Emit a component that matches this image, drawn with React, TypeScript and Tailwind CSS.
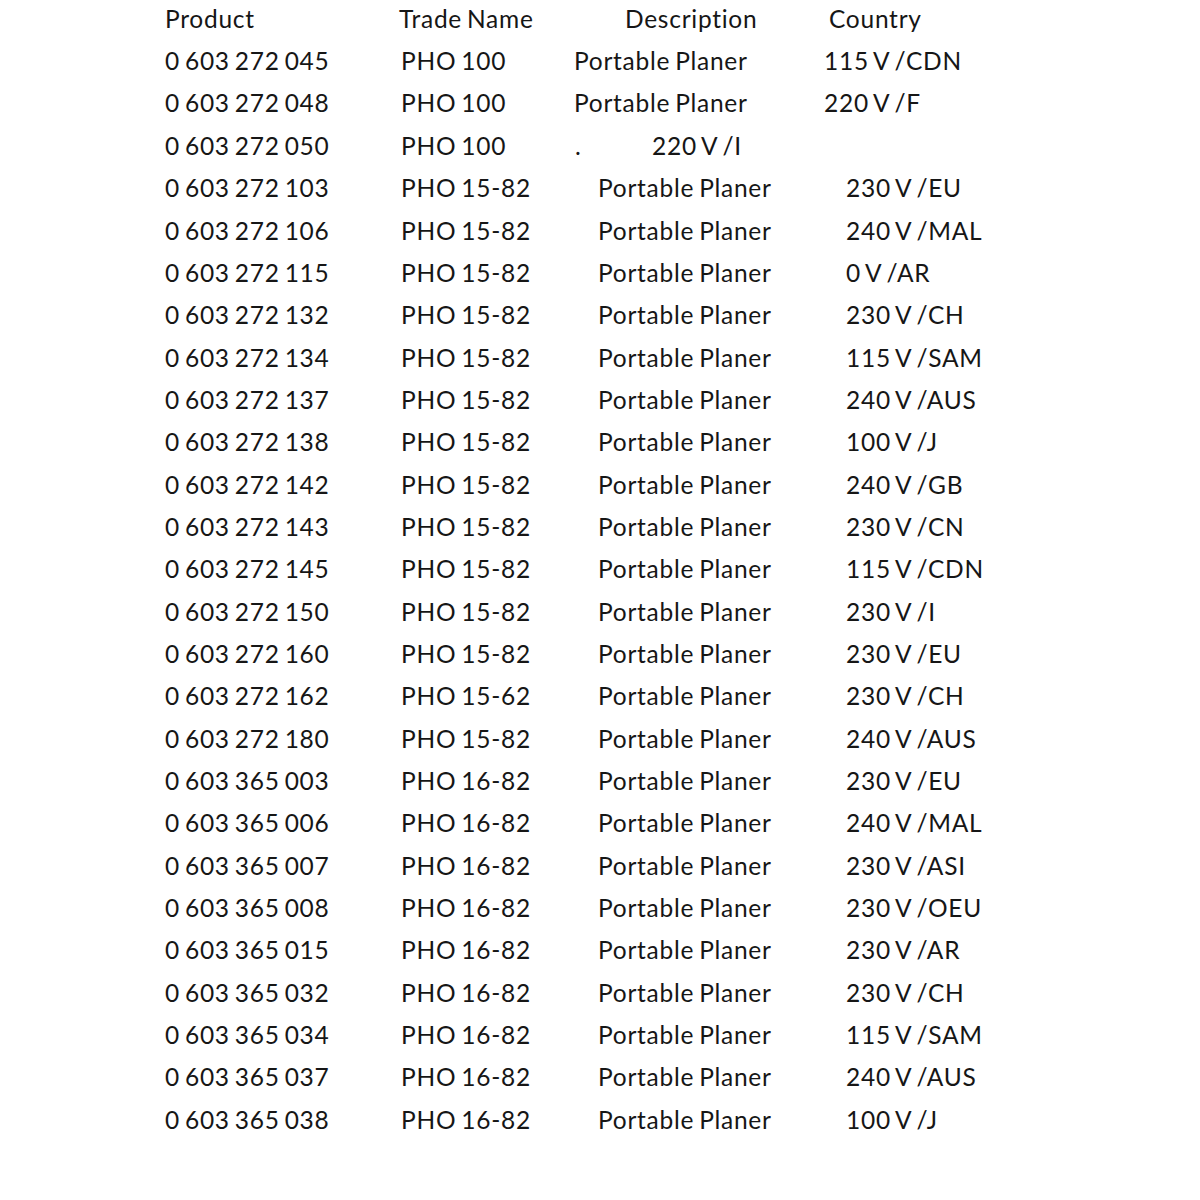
import React from "react";

type Row = {
    product: string;
    trade: string;
    desc: string;
    country: string;
};

const rows: Row[] = [
    { product: "0 603 272 103", trade: "PHO 15-82", desc: "Portable Planer", country: "230 V /EU" },
    { product: "0 603 272 106", trade: "PHO 15-82", desc: "Portable Planer", country: "240 V /MAL" },
    { product: "0 603 272 115", trade: "PHO 15-82", desc: "Portable Planer", country: "0 V /AR" },
    { product: "0 603 272 132", trade: "PHO 15-82", desc: "Portable Planer", country: "230 V /CH" },
    { product: "0 603 272 134", trade: "PHO 15-82", desc: "Portable Planer", country: "115 V /SAM" },
    { product: "0 603 272 137", trade: "PHO 15-82", desc: "Portable Planer", country: "240 V /AUS" },
    { product: "0 603 272 138", trade: "PHO 15-82", desc: "Portable Planer", country: "100 V /J" },
    { product: "0 603 272 142", trade: "PHO 15-82", desc: "Portable Planer", country: "240 V /GB" },
    { product: "0 603 272 143", trade: "PHO 15-82", desc: "Portable Planer", country: "230 V /CN" },
    { product: "0 603 272 145", trade: "PHO 15-82", desc: "Portable Planer", country: "115 V /CDN" },
    { product: "0 603 272 150", trade: "PHO 15-82", desc: "Portable Planer", country: "230 V /I" },
    { product: "0 603 272 160", trade: "PHO 15-82", desc: "Portable Planer", country: "230 V /EU" },
    { product: "0 603 272 162", trade: "PHO 15-62", desc: "Portable Planer", country: "230 V /CH" },
    { product: "0 603 272 180", trade: "PHO 15-82", desc: "Portable Planer", country: "240 V /AUS" },
    { product: "0 603 365 003", trade: "PHO 16-82", desc: "Portable Planer", country: "230 V /EU" },
    { product: "0 603 365 006", trade: "PHO 16-82", desc: "Portable Planer", country: "240 V /MAL" },
    { product: "0 603 365 007", trade: "PHO 16-82", desc: "Portable Planer", country: "230 V /ASI" },
    { product: "0 603 365 008", trade: "PHO 16-82", desc: "Portable Planer", country: "230 V /OEU" },
    { product: "0 603 365 015", trade: "PHO 16-82", desc: "Portable Planer", country: "230 V /AR" },
    { product: "0 603 365 032", trade: "PHO 16-82", desc: "Portable Planer", country: "230 V /CH" },
    { product: "0 603 365 034", trade: "PHO 16-82", desc: "Portable Planer", country: "115 V /SAM" },
    { product: "0 603 365 037", trade: "PHO 16-82", desc: "Portable Planer", country: "240 V /AUS" },
    { product: "0 603 365 038", trade: "PHO 16-82", desc: "Portable Planer", country: "100 V /J" },
];

function App() {
    return (
        <div
            className="w-[1200px] h-[1200px] bg-white text-[#161616] text-[24.5px] tracking-[0.03em] [word-spacing:-2px] overflow-hidden"
            style={{ fontFamily: "Lato, 'Open Sans', sans-serif" }}>
            <div className="flex flex-col pl-[165px] -mt-[2px]">
                {/* header */}
                <div className="flex h-[42.35px] items-center whitespace-nowrap">
                    <span className="w-[234px]">Product</span>
                    <span className="w-[226px]">Trade Name</span>
                    <span className="w-[204px]">Description</span>
                    <span>Country</span>
                </div>
                <div className="flex h-[42.35px] items-center whitespace-nowrap">
                    <span className="w-[236px]">0 603 272 045</span>
                    <span className="w-[173px]">PHO 100</span>
                    <span className="w-[250px]">Portable Planer</span>
                    <span>115 V /CDN</span>
                </div>
                <div className="flex h-[42.35px] items-center whitespace-nowrap">
                    <span className="w-[236px]">0 603 272 048</span>
                    <span className="w-[173px]">PHO 100</span>
                    <span className="w-[250px]">Portable Planer</span>
                    <span>220 V /F</span>
                </div>
                <div className="flex h-[42.35px] items-center whitespace-nowrap">
                    <span className="w-[236px]">0 603 272 050</span>
                    <span className="w-[174px]">PHO 100</span>
                    <span className="w-[77px]">.</span>
                    <span>220 V /I</span>
                </div>
                {rows.map((r) => (
                    <div key={r.product} className="flex h-[42.35px] items-center whitespace-nowrap">
                        <span className="w-[236px]">{r.product}</span>
                        <span className="w-[197px]">{r.trade}</span>
                        <span className="w-[248px]">{r.desc}</span>
                        <span>{r.country}</span>
                    </div>
                ))}
            </div>
        </div>
    );
}

export default App;
